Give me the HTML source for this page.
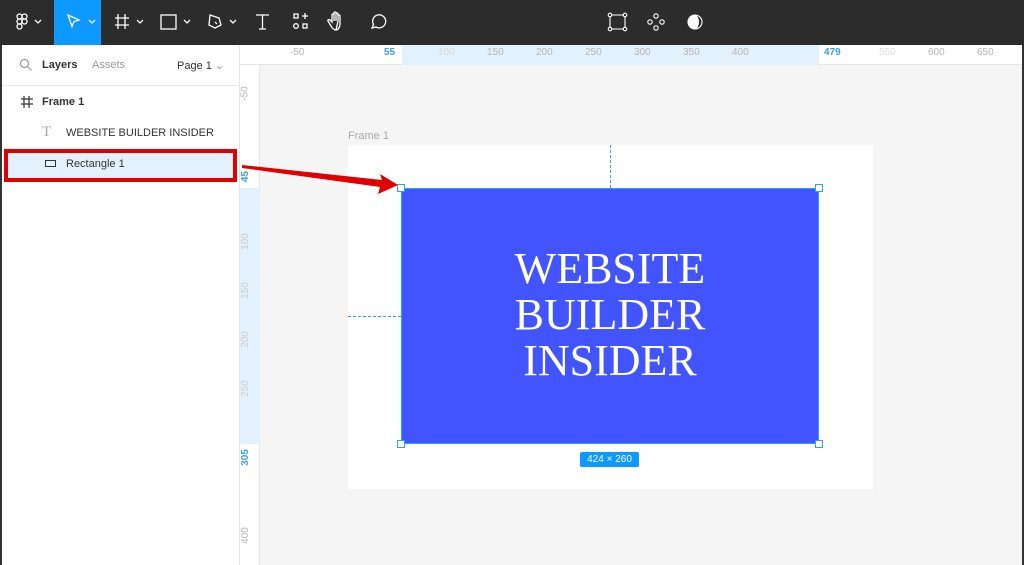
<!DOCTYPE html>
<html><head><meta charset="utf-8"><style>
*{margin:0;padding:0;box-sizing:border-box}
body{width:1024px;height:565px;overflow:hidden;background:#f5f5f5;font-family:"Liberation Sans",sans-serif;position:relative}
.abs{position:absolute}
#tb{left:0;top:0;width:1024px;height:45px;background:#2c2c2c}
#left{left:0;top:45px;width:240px;height:520px;background:#fff;border-right:1px solid #e5e5e5;border-left:2px solid #333}
.t{position:absolute;font-size:11px;color:#333;white-space:nowrap}
.rn{position:absolute;font-size:10px;color:#b5b5b5}
.rb{color:#3a9ef0;font-weight:bold}
</style></head><body>
<div id="tb" class="abs">
<div class="abs" style="left:54px;top:0;width:47px;height:45px;background:#0d99ff"></div>
<svg class="abs" style="left:0;top:0" width="720" height="45" fill="none" stroke="#fff" stroke-width="1.3">
<g><rect x="17" y="14" width="5" height="5" rx="2.5"/><rect x="22" y="14" width="5" height="5" rx="2.5"/><rect x="17" y="19" width="5" height="5" rx="2.5"/><circle cx="24.5" cy="21.5" r="2.5"/><rect x="17" y="24" width="5" height="5" rx="2.5"/></g>
<path d="M35 20l3 3 3-3"/>
<path d="M68 15l11 5-5 1.5-2 5z"/><path d="M89 20l3 3 3-3"/>
<path d="M118 14v15M125 14v15M115 18h14M115 25h14"/><path d="M137 20l3 3 3-3"/>
<rect x="161" y="15" width="15" height="14"/><path d="M184 20l3 3 3-3"/>
<path d="M210 15l9 3 2 7-6 3-6-3z M215 22l2 2"/><path d="M230 20l3 3 3-3"/>
<path d="M256 15h13M262.5 15v14M259 29h7"/>
<rect x="294" y="14" width="4" height="4"/><path d="M305 13v6M302 16h6"/><circle cx="296" cy="26" r="2.3"/><rect x="303" y="24" width="4" height="4"/>
<path d="M336 30c-2 0-4-2-5-4l-3-5c-.5-1 1-2 2-1l2 2V15c0-1.3 2-1.3 2 0v6M334 21V13c0-1.3 2-1.3 2 0v8M336 21v-7c0-1.3 2-1.3 2 0v7M338 21v-5c0-1.3 2-1.3 2 0v8c0 3-2 6-4 6z"/>
<path d="M372 28l1.5-3.5a6.5 6.5 0 1 1 2.5 2.5z"/>
<g stroke-width="1.1"><path d="M611 15h13M611 29h13M610 16v12M625 16v12"/><circle cx="610" cy="15" r="1.8"/><circle cx="625" cy="15" r="1.8"/><circle cx="610" cy="29" r="1.8"/><circle cx="625" cy="29" r="1.8"/>
<circle cx="656" cy="16" r="2.2"/><circle cx="656" cy="28" r="2.2"/><circle cx="650" cy="22" r="2.2"/><circle cx="662" cy="22" r="2.2"/>
<circle cx="695" cy="22" r="7"/></g>
<path d="M695 15a7 7 0 0 0 0 14 4 7 0 0 0 0-14z" fill="#fff" stroke="none"/>
</svg>
</div>
<div id="left" class="abs">
<svg class="abs" style="left:17px;top:13px" width="14" height="14" fill="none" stroke="#999" stroke-width="1.2"><circle cx="5.5" cy="5.5" r="4"/><path d="M8.5 8.5l4 4"/></svg>
<div class="t" style="left:40px;top:14px;font-weight:bold">Layers</div>
<div class="t" style="left:90px;top:14px;color:#999">Assets</div>
<div class="t" style="left:175px;top:14px">Page 1 <span style="color:#999">⌄</span></div>
<div class="abs" style="left:0;top:40px;width:238px;height:1px;background:#e8e8e8"></div>
<svg class="abs" style="left:18px;top:50px" width="14" height="14" fill="none" stroke="#333" stroke-width="1.2"><path d="M4 1v12M9 1v12M1 4h12M1 9h12"/></svg>
<div class="t" style="left:40px;top:51px;font-weight:bold">Frame 1</div>
<div class="t" style="left:40px;color:#aaa;font-family:'Liberation Serif',serif;font-size:15px;top:79px">T</div>
<div class="t" style="left:64px;top:82px">WEBSITE BUILDER INSIDER</div>
<div class="abs" style="left:2px;top:104px;width:233px;height:33px;background:#e3f1fd;border:4px solid #e00000"></div>
<div class="abs" style="left:43px;top:115px;width:11px;height:7px;border:1.3px solid #333"></div>
<div class="t" style="left:64px;top:113px">Rectangle 1</div>
</div>
<!-- rulers -->
<div class="abs" style="left:240px;top:45px;width:784px;height:20px;background:#fff;border-bottom:1px solid #e5e5e5"></div>
<div class="abs" style="left:402px;top:45px;width:417px;height:20px;background:#e3f1fd"></div>
<div class="abs" style="left:240px;top:65px;width:20px;height:500px;background:#fff;border-right:1px solid #e5e5e5"></div>
<div class="abs" style="left:240px;top:188px;width:20px;height:256px;background:#e3f1fd"></div>
<div class="rn" style="left:290px;top:47px">-50</div>
<div class="rn rb" style="left:384px;top:47px">55</div>
<div class="rn" style="left:438px;top:47px;color:#d5d5d5">100</div>
<div class="rn" style="left:487px;top:47px">150</div>
<div class="rn" style="left:536px;top:47px">200</div>
<div class="rn" style="left:585px;top:47px">250</div>
<div class="rn" style="left:634px;top:47px">300</div>
<div class="rn" style="left:683px;top:47px">350</div>
<div class="rn" style="left:732px;top:47px">400</div>
<div class="rn rb" style="left:824px;top:47px">479</div>
<div class="rn" style="left:879px;top:47px;color:#ddd">550</div>
<div class="rn" style="left:928px;top:47px">600</div>
<div class="rn" style="left:977px;top:47px">650</div>
<div class="rn" style="left:238px;top:88px;transform:rotate(-90deg)">-50</div>
<div class="rn rb" style="left:240px;top:171px;transform:rotate(-90deg)">45</div>
<div class="rn" style="left:237px;top:236px;transform:rotate(-90deg);color:#ccc">100</div>
<div class="rn" style="left:237px;top:285px;transform:rotate(-90deg);color:#ccc">150</div>
<div class="rn" style="left:237px;top:334px;transform:rotate(-90deg);color:#ccc">200</div>
<div class="rn" style="left:237px;top:383px;transform:rotate(-90deg);color:#ccc">250</div>
<div class="rn rb" style="left:237px;top:452px;transform:rotate(-90deg)">305</div>
<div class="rn" style="left:237px;top:530px;transform:rotate(-90deg)">400</div>
<!-- canvas -->
<div class="abs" style="left:348px;top:130px;font-size:11px;color:#aaa">Frame 1</div>
<div class="abs" style="left:348px;top:145px;width:525px;height:344px;background:#fff"></div>
<div class="abs" style="left:610px;top:145px;height:43px;border-left:1px dashed #3aa0f0"></div>
<div class="abs" style="left:348px;top:316px;width:53px;border-top:1px dashed #3aa0f0"></div>
<div class="abs" style="left:401px;top:188px;width:418px;height:256px;background:#4154fd;border:1px solid #2ea0ff"></div>
<div class="abs" style="left:401px;top:246px;width:418px;text-align:center;font-family:'Liberation Serif',serif;font-size:44px;line-height:46px;color:#fff">WEBSITE<br>BUILDER<br>INSIDER</div>
<div class="abs" style="left:397px;top:184px;width:8px;height:8px;background:#fff;border:1px solid #2ea0ff"></div>
<div class="abs" style="left:815px;top:184px;width:8px;height:8px;background:#fff;border:1px solid #2ea0ff"></div>
<div class="abs" style="left:397px;top:440px;width:8px;height:8px;background:#fff;border:1px solid #2ea0ff"></div>
<div class="abs" style="left:815px;top:440px;width:8px;height:8px;background:#fff;border:1px solid #2ea0ff"></div>
<div class="abs" style="left:580px;top:452px;width:59px;height:15px;background:#0d99ff;border-radius:2px;color:#fff;font-size:10px;text-align:center;line-height:15px">424 × 260</div>
<svg class="abs" style="left:0;top:0" width="1024" height="565"><path d="M242 165L382 180 380 174 398 185 378 194 380 187 242 168z" fill="#e00000"/></svg>
<div class="abs" style="left:1022px;top:45px;width:2px;height:520px;background:#333"></div>
</body></html>
